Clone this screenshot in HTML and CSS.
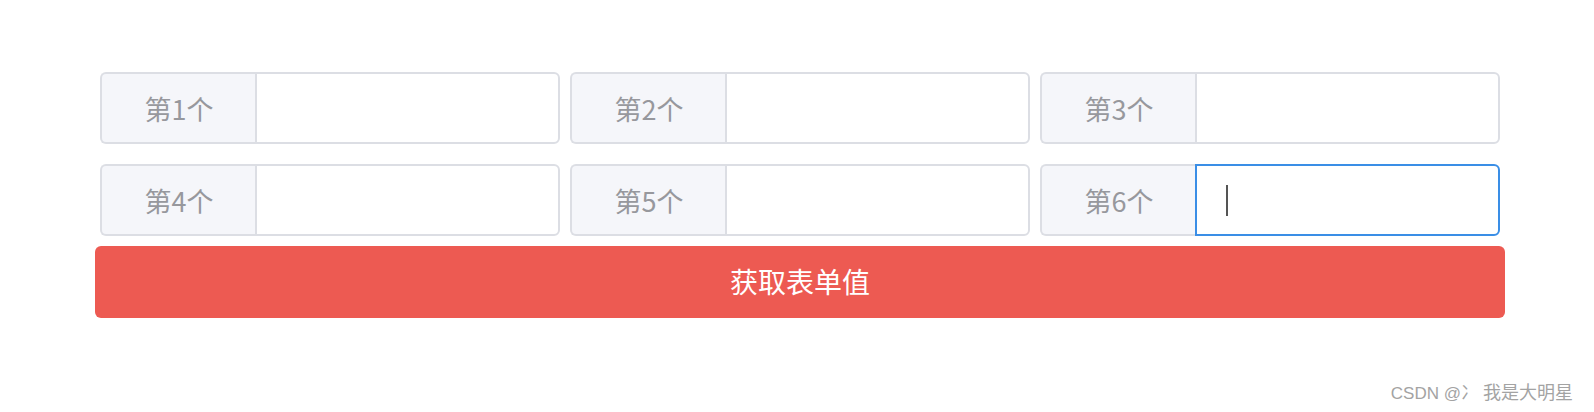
FILE: index.html
```html
<!DOCTYPE html>
<html lang="zh-CN">
<head>
<meta charset="utf-8">
<title>表单</title>
<link rel="stylesheet" href="styles.css">
</head>
<body>
<div class="page">
  <form class="form">
    <div class="grid">
      <div class="cell"><label class="field"><span class="label">第1个</span><span class="input"></span></label></div>
      <div class="cell"><label class="field"><span class="label">第2个</span><span class="input"></span></label></div>
      <div class="cell"><label class="field"><span class="label">第3个</span><span class="input"></span></label></div>
      <div class="cell"><label class="field"><span class="label">第4个</span><span class="input"></span></label></div>
      <div class="cell"><label class="field"><span class="label">第5个</span><span class="input"></span></label></div>
      <div class="cell"><label class="field"><span class="label">第6个</span><span class="input focused"><span class="caret"></span></span></label></div>
    </div>
    <button type="button" class="submit">获取表单值</button>
  </form>
  <div class="watermark"><span class="wm-latin">CSDN @</span>冫 我是大明星</div>
</div>
</body>
</html>
```

FILE: styles.css
```css
html, body {
  margin: 0;
  padding: 0;
  background: #ffffff;
}
.page {
  position: relative;
  width: 1594px;
  height: 412px;
  font-family: "Noto Sans CJK SC", "Noto Sans", sans-serif;
}
.form {
  width: 1410px;
  margin-left: 95px;
  padding-top: 62px;
  display: flex;
  flex-direction: column;
}
.grid {
  display: grid;
  grid-template-columns: repeat(3, 1fr);
}
.cell {
  padding: 10px 5px;
}
.field {
  display: flex;
  height: 72px;
  box-sizing: border-box;
}
.label {
  width: 155px;
  box-sizing: border-box;
  background: #f5f6fa;
  border: 2px solid #dcdee4;
  border-right: none;
  border-radius: 6px 0 0 6px;
  display: flex;
  align-items: center;
  justify-content: center;
  font-size: 27px;
  font-weight: 400;
  color: #97989d;
  padding-left: 1px;
}
.input {
  flex: 1;
  box-sizing: border-box;
  border: 2px solid #dcdee4;
  border-radius: 0 6px 6px 0;
  background: #ffffff;
  display: flex;
  align-items: center;
  padding-left: 29px;
}
.input.focused {
  border-color: #3a8ee6;
}
.caret {
  width: 2px;
  height: 31px;
  background: #555555;
}
.submit {
  height: 72px;
  border: none;
  border-radius: 6px;
  background: #ed5a52;
  color: #ffffff;
  font-family: "Noto Sans CJK SC", "Noto Sans", sans-serif;
  font-size: 28px;
  padding: 0;
  padding-bottom: 3px;
}
.watermark {
  position: absolute;
  right: 21px;
  top: 380px;
  font-size: 18px;
  line-height: 22px;
  color: #a3a3a3;
  text-shadow: 0 0 1px #ffffff;
  white-space: pre;
}
.wm-latin {
  font-family: "Liberation Sans", sans-serif;
  font-size: 17px;
}
```
